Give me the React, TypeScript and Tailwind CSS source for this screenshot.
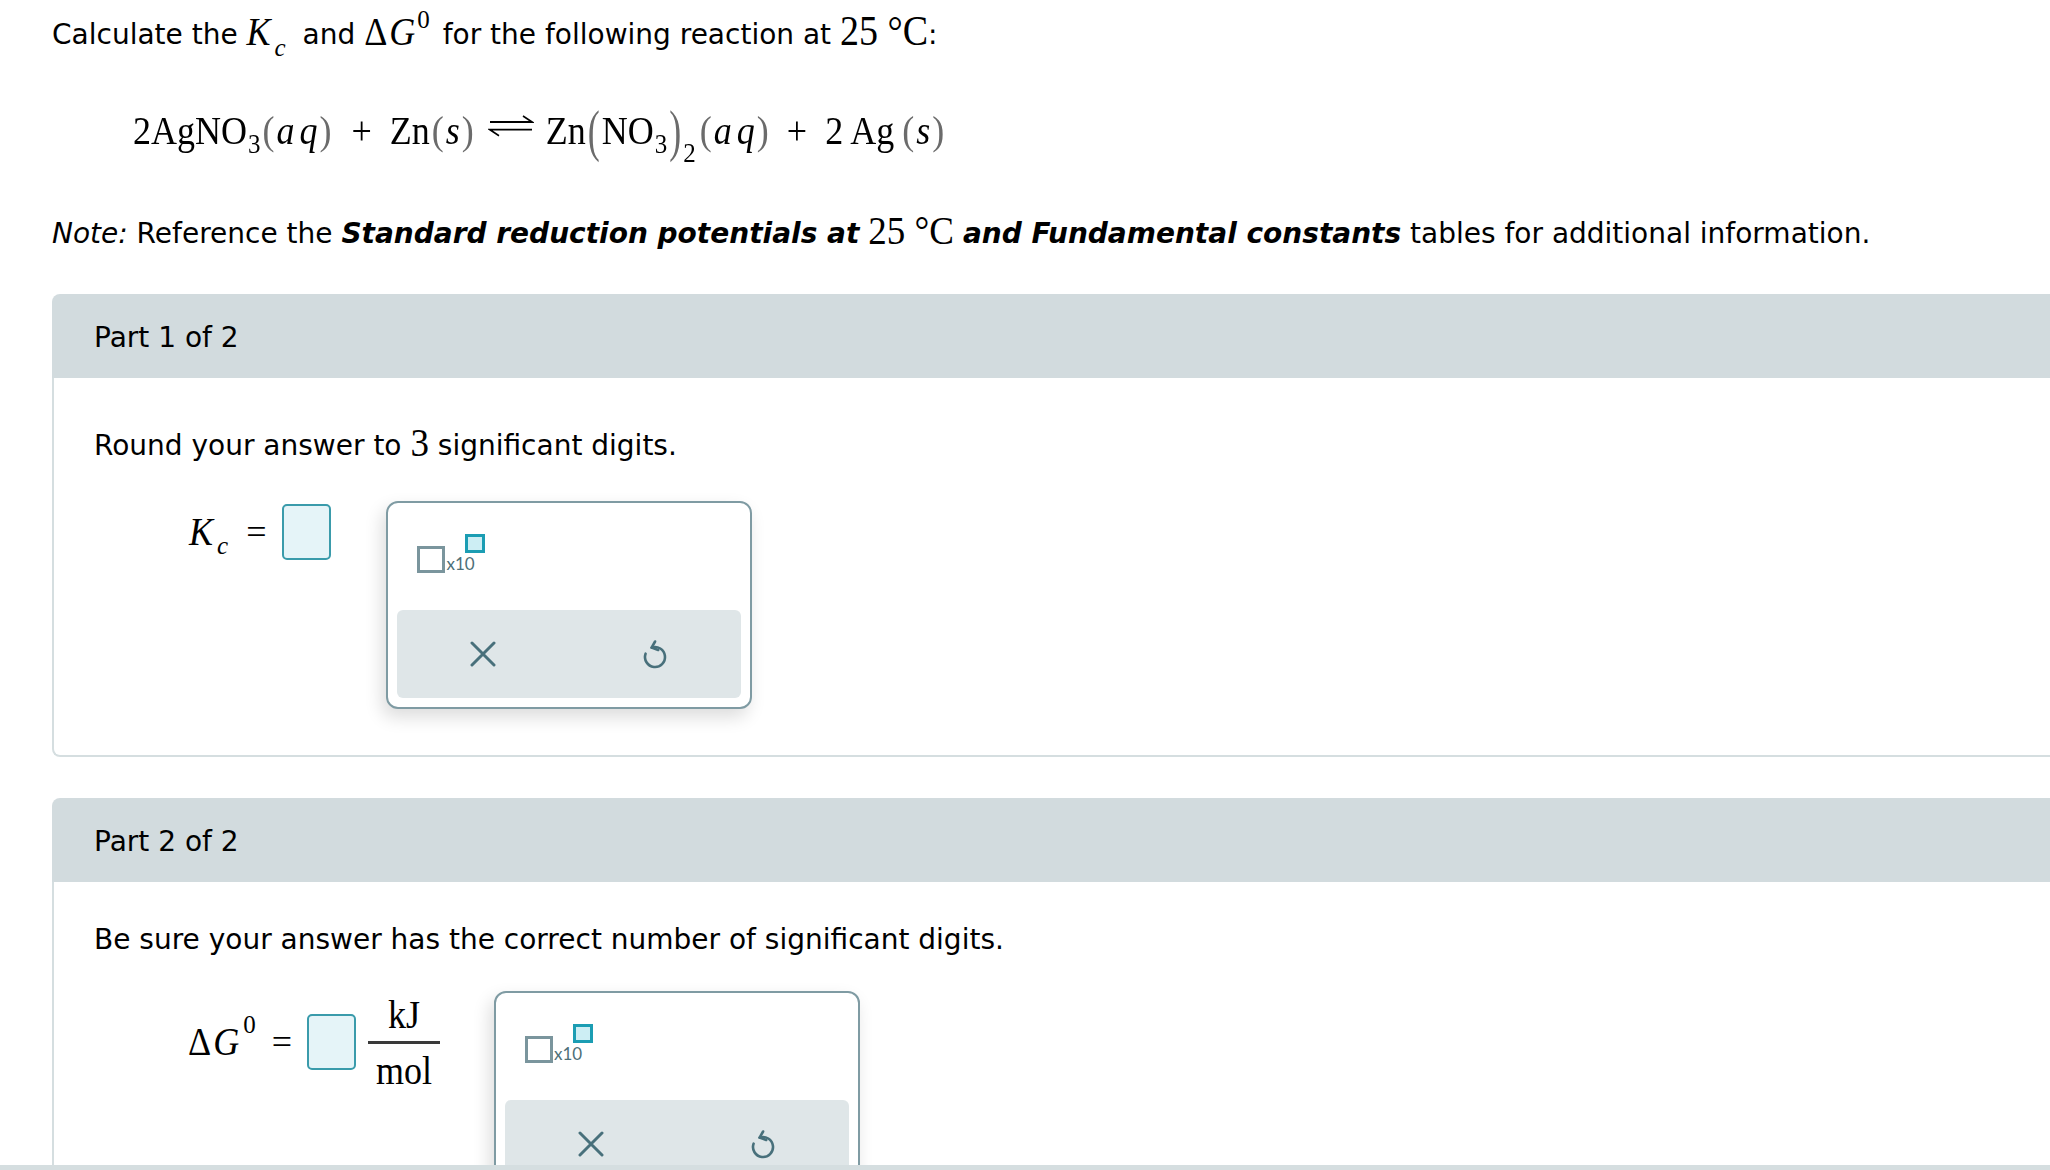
import React from 'react'

const sans = "font-['DejaVu_Sans','Verdana',sans-serif]"
const serif = "font-['Liberation_Serif','Times_New_Roman',serif]"

function Paren({ children, big }: { children: React.ReactNode; big?: boolean }) {
  return (
    <span className={big ? 'inline-block text-[#6b6b6b] scale-y-[1.45] mx-[2px]' : 'inline-block text-[#6b6b6b] mx-[2px]'}>
      {children}
    </span>
  )
}

function Harpoons() {
  return (
    <svg width="46" height="22" viewBox="0 0 46 22" className="inline-block mx-[12px] relative top-[-8px]" fill="none" stroke="#000" strokeWidth="1.6">
      <path d="M2 7 H44 L35 1.5" />
      <path d="M44 14 H2 L11 19.5" />
    </svg>
  )
}

function UndoIcon() {
  // anticlockwise open circle, arrowhead at the top pointing left
  return (
    <svg width="28" height="32" viewBox="0 0 28 32" fill="none" stroke="#48707b" strokeWidth="2.6" strokeLinecap="round" strokeLinejoin="round">
      <path d="M4.6 15.6 A10 10 0 1 0 10.6 9.6" />
      <path d="M14.1 3.5 L10.6 9.6 L17.2 12" />
    </svg>
  )
}

function XIcon() {
  return (
    <svg width="26" height="26" viewBox="0 0 26 26" fill="none" stroke="#48707b" strokeWidth="3" strokeLinecap="round">
      <path d="M2 2 L24 24 M24 2 L2 24" />
    </svg>
  )
}

function Keypad() {
  return (
    <div className="w-[366px] h-[208px] shrink-0 rounded-[12px] border-[2px] border-[#7f9ba3] bg-white shadow-[-4px_8px_18px_rgba(0,0,0,0.14)] flex flex-col">
      <div className="h-[107px] relative">
        <div className="absolute left-[29px] top-[43px] w-[28px] h-[27px] border-[3px] border-[#7a959d]" />
        <span className="absolute left-[58px] top-[52px] text-[17px] leading-none text-[#4d6f78] font-['Lato',sans-serif]">x10</span>
        <div className="absolute left-[77px] top-[31px] w-[20px] h-[19px] border-[3px] border-[#1b9db3] bg-[#cdeef4]" />
      </div>
      <div className="mx-[9px] h-[88px] rounded-[6px] bg-[#dfe6e8] grid grid-cols-2">
        <div className="flex items-center justify-center">
          <XIcon />
        </div>
        <div className="flex items-center justify-center">
          <UndoIcon />
        </div>
      </div>
    </div>
  )
}

function InputBox() {
  return <div className="w-[49px] h-[56px] rounded-[5px] border-[2.5px] border-[#3a9bab] bg-[#e5f4f8]" />
}

function PartHeader({ label }: { label: string }) {
  return (
    <div className="h-[84px] bg-[#d2dbde] rounded-tl-[8px] flex items-center pl-[42px] pt-[3px] text-[28px] text-black">
      {label}
    </div>
  )
}

export default function App() {
  return (
    <div className={`w-[2050px] h-[1170px] overflow-hidden bg-white relative ${sans} text-black`}>
      <div className="pl-[52px] pt-[11px]">
        <div className="text-[28px] leading-[40px] h-[40px] whitespace-nowrap">
          Calculate the{' '}
          <span className={`${serif} italic text-[36px] inline-block scale-y-110`}>K</span>
          <span className={`${serif} italic text-[25px] relative top-[12px] ml-[4px] mr-[8px]`}>c</span>{' '}
          and{' '}
          <span className={`${serif} text-[36px] inline-block scale-y-110`}>Δ</span>
          <span className={`${serif} italic text-[36px] inline-block scale-y-110 ml-[2px]`}>G</span>
          <span className={`${serif} text-[25px] relative top-[-16px] ml-[2px] mr-[4px]`}>0</span>{' '}
          for the following reaction at{' '}
          <span className={`${serif} text-[38px] inline-block scale-y-110`}>25 °C</span>:
        </div>

        <div className={`${serif} ml-[81px] mt-[50px] h-[60px] leading-[60px] text-[36px] whitespace-nowrap`}>
          <span className="inline-block scale-y-110">
            <span>2AgNO</span>
            <span className="text-[25px] relative top-[8px] ml-[1px]">3</span>
            <Paren>(</Paren>
            <i>a</i>
            <i className="ml-[5px]">q</i>
            <Paren>)</Paren>
            <span className="mx-[18px]">+</span>
            <span>Zn</span>
            <Paren>(</Paren>
            <i>s</i>
            <Paren>)</Paren>
            <Harpoons />
            <span>Zn</span>
            <Paren big>(</Paren>
            <span>NO</span>
            <span className="text-[25px] relative top-[8px] ml-[1px]">3</span>
            <Paren big>)</Paren>
            <span className="text-[25px] relative top-[16px] mr-[2px]">2</span>
            <Paren>(</Paren>
            <i>a</i>
            <i className="ml-[5px]">q</i>
            <Paren>)</Paren>
            <span className="ml-[16px] mr-[18px]">+</span>
            <span>2 Ag</span>
            <span className="ml-[6px]" />
            <Paren>(</Paren>
            <i>s</i>
            <Paren>)</Paren>
          </span>
        </div>

        <div className="mt-[50px] text-[28px] leading-[40px] h-[40px] whitespace-nowrap">
          <i>Note:</i> Reference the{' '}
          <b className="italic">Standard reduction potentials at</b>{' '}
          <span className={`${serif} text-[37px] inline-block scale-y-110`}>25 °C</span>{' '}
          <b className="italic">and Fundamental constants</b> tables for additional information.
        </div>

        <div className="mt-[43px] w-[2060px]">
          <PartHeader label="Part 1 of 2" />
          <div className="border-l-2 border-b-2 border-[#d5dee0] rounded-bl-[8px] pl-[40px] pt-[45px] pb-[46px]">
            <div className="text-[28px] leading-[40px] h-[40px]">
              Round your answer to <span className={`${serif} text-[37px] inline-block scale-y-110`}>3</span> significant digits.
            </div>
            <div className="mt-[38px] flex items-start ml-[95px]">
              <div className={`${serif} flex items-center mt-[3px] h-[56px] text-[36px]`}>
                <i className="inline-block scale-y-110">K</i>
                <i className="text-[25px] relative top-[14px] ml-[4px]">c</i>
                <span className="ml-[18px] mr-[16px]">=</span>
                <InputBox />
              </div>
              <div className="ml-[55px]">
                <Keypad />
              </div>
            </div>
          </div>
        </div>

        <div className="mt-[41px] w-[2060px]">
          <PartHeader label="Part 2 of 2" />
          <div className="border-l-2 border-[#d5dee0] pl-[40px] pt-[38px] h-[400px]">
            <div className="text-[28px] leading-[40px] h-[40px]">
              Be sure your answer has the correct number of significant digits.
            </div>
            <div className="mt-[31px] flex items-start ml-[94px]">
              <div className={`${serif} flex items-center mt-[10px] h-[82px] text-[36px]`}>
                <span className="inline-block scale-y-110">Δ</span>
                <i className="inline-block scale-y-110 ml-[2px]">G</i>
                <span className="text-[25px] relative top-[-17px] ml-[4px]">0</span>
                <span className="ml-[16px] mr-[15px]">=</span>
                <InputBox />
                <div className="ml-[12px] flex flex-col items-center leading-none">
                  <span className="pb-[8px] inline-block scale-y-110">kJ</span>
                  <span className="w-[72px] h-[3px] bg-[#3a3a3a]" />
                  <span className="pt-[8px] inline-block scale-y-110">mol</span>
                </div>
              </div>
              <div className="ml-[54px]">
                <Keypad />
              </div>
            </div>
          </div>
        </div>
      </div>
      <div className="absolute left-0 bottom-0 w-full h-[5px] bg-[#d5dee0]" />
    </div>
  )
}
